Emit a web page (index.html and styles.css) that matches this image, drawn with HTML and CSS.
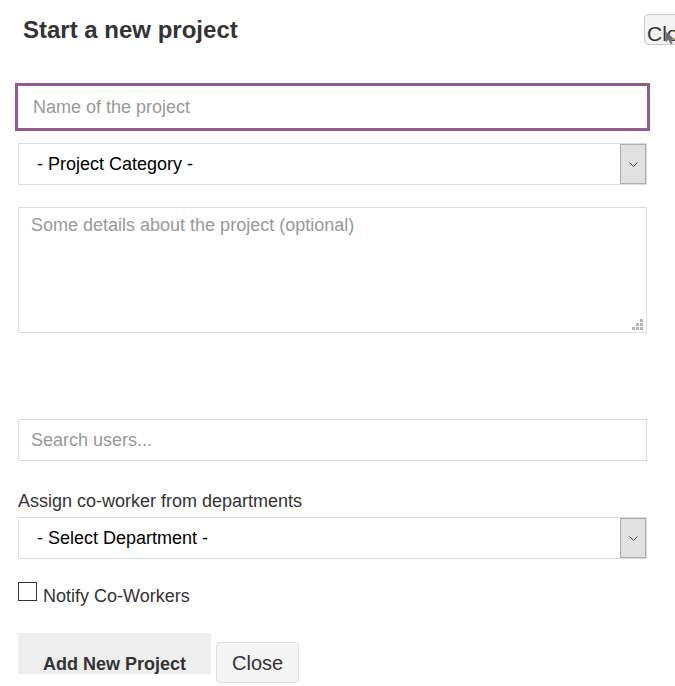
FILE: index.html
```html
<!DOCTYPE html>
<html lang="en">
<head>
<meta charset="utf-8">
<title>Start a new project</title>
<link rel="stylesheet" href="styles.css">
</head>
<body>
<div class="modal">
  <div class="head">
    <h2 class="head-title">Start a new project</h2>
    <button class="head-close" type="button">Close</button>
  </div>
  <form class="form">
    <input class="field field-focus" type="text" placeholder="Name of the project">
    <div class="select select-cat">
      <span class="select-text">- Project Category -</span>
      <span class="select-arrow"><svg width="9" height="5" viewBox="0 0 9 5"><path d="M0.5 0.5 L4.5 4.5 L8.5 0.5" fill="none" stroke="#444" stroke-width="1"/></svg></span>
    </div>
    <div class="area-wrap">
      <textarea class="area" placeholder="Some details about the project (optional)"></textarea>
      <svg class="grip" width="11" height="11" viewBox="0 0 11 11"><g fill="#b5b5b5"><rect x="8" y="0" width="3" height="3"/><rect x="4" y="4" width="3" height="3"/><rect x="8" y="4" width="3" height="3"/><rect x="0" y="8" width="3" height="3"/><rect x="4" y="8" width="3" height="3"/><rect x="8" y="8" width="3" height="3"/></g></svg>
    </div>
    <input class="field field-search" type="text" placeholder="Search users...">
    <label class="label">Assign co-worker from departments</label>
    <div class="select">
      <span class="select-text">- Select Department -</span>
      <span class="select-arrow"><svg width="9" height="5" viewBox="0 0 9 5"><path d="M0.5 0.5 L4.5 4.5 L8.5 0.5" fill="none" stroke="#444" stroke-width="1"/></svg></span>
    </div>
    <label class="check-row"><input class="check" type="checkbox"><span class="check-text">Notify Co-Workers</span></label>
    <div class="actions">
      <button class="btn-add" type="button">Add New Project</button>
      <button class="btn-close" type="button">Close</button>
    </div>
  </form>
</div>
<svg class="cursor" width="12" height="14" viewBox="0 0 12 14"><path d="M1 1 L1 11 L3.6 8.6 L5.6 13 L7.4 12.2 L5.4 7.9 L9 7.9 Z" fill="#6b6b6b" stroke="#8a8a8a" stroke-width="0.6"/></svg>
</body>
</html>
```

FILE: styles.css
```css
html, body {
  margin: 0;
  padding: 0;
  overflow: hidden;
  background: #fff;
}
body {
  font-family: "Liberation Sans", Arial, sans-serif;
  color: #333;
  width: 675px;
  height: 686px;
  position: relative;
}
.modal {
  padding: 0 28px 0 18px;
  width: 629px;
}
.head {
  display: flex;
  align-items: flex-start;
  padding-top: 14px;
  width: 700px;
}
.head-title {
  flex: 0 0 621px;
  margin: 2px 0 0 0;
  padding-left: 5px;
  font-size: 24px;
  line-height: 28px;
  font-weight: bold;
  color: #333;
}
.head-close {
  flex-shrink: 0;
  font-family: "Liberation Sans", Arial, sans-serif;
  font-size: 21px;
  line-height: 20px;
  color: #333;
  background: #f4f4f4;
  border: 1px solid #ccc;
  border-radius: 4px;
  padding: 9px 2px 0;
  white-space: nowrap;
}
.form {
  display: flex;
  flex-direction: column;
}
.field {
  box-sizing: border-box;
  height: 42px;
  width: 629px;
  border: 1px solid #ddd;
  padding: 0 12px;
  font-family: "Liberation Sans", Arial, sans-serif;
  font-size: 18px;
  color: #333;
  outline: none;
  margin: 0;
}
.field::placeholder, .area::placeholder {
  color: #999;
}
.field-focus {
  height: 48px;
  width: 635px;
  margin: 38px 0 0 -3px;
  border: 3px solid #935b8e;
  padding-left: 15px;
}
.select {
  box-sizing: border-box;
  display: flex;
  height: 42px;
  border: 1px solid #ddd;
  font-size: 18px;
  color: #000;
}
.select-cat {
  margin-top: 12px;
}
.select-text {
  flex: 1;
  align-self: center;
  padding-left: 18px;
}
.select-arrow {
  box-sizing: border-box;
  width: 26px;
  background: #e1e1e1;
  border: 1px solid #ababab;
  display: flex;
  align-items: center;
  justify-content: center;
}
.area-wrap {
  position: relative;
  margin-top: 22px;
  height: 126px;
}
.area {
  box-sizing: border-box;
  display: block;
  width: 629px;
  height: 126px;
  margin: 0;
  border: 1px solid #ddd;
  padding: 7px 12px;
  font-family: "Liberation Sans", Arial, sans-serif;
  font-size: 18px;
  color: #333;
  outline: none;
  resize: none;
}
.grip {
  position: absolute;
  right: 4px;
  bottom: 3px;
}
.field-search {
  margin-top: 86px;
}
.label {
  margin: 30px 0 5px;
  font-size: 18px;
  color: #333;
}
.check-row {
  display: flex;
  align-items: flex-start;
  margin-top: 23px;
  font-size: 18px;
  color: #333;
}
.check {
  appearance: none;
  -webkit-appearance: none;
  box-sizing: border-box;
  width: 19px;
  height: 19px;
  border: 1px solid #333;
  background: #fff;
  margin: 0 6px 0 0;
}
.check-text {
  padding-top: 4px;
}
.actions {
  display: flex;
  align-items: baseline;
  gap: 5px;
  margin-top: 26px;
}
.btn-add {
  font-family: "Liberation Sans", Arial, sans-serif;
  font-size: 18px;
  font-weight: bold;
  color: #333;
  background: #eee;
  border: none;
  padding: 22px 25px 0;
  line-height: 19px;
}
.btn-close {
  font-family: "Liberation Sans", Arial, sans-serif;
  font-size: 20px;
  color: #333;
  background: #f5f5f5;
  border: 1px solid #ddd;
  border-radius: 4px;
  padding: 9px 15px 7px;
  line-height: 23px;
}
.cursor {
  position: absolute;
  left: 665px;
  top: 31px;
}
```
